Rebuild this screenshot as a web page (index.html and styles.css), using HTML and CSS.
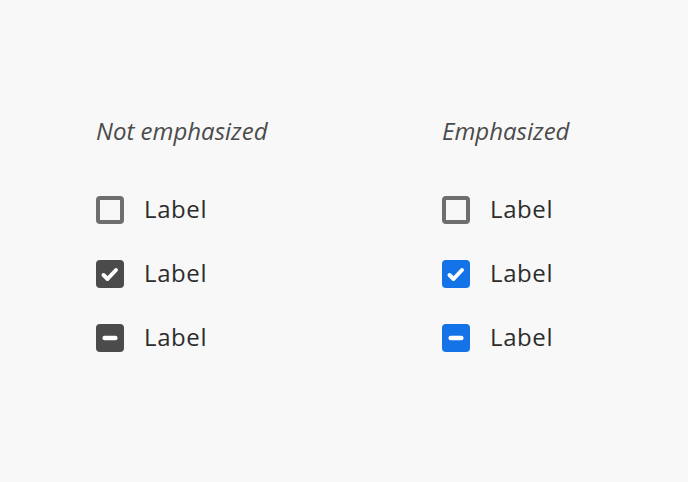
FILE: index.html
```html
<!DOCTYPE html>
<html>
<head>
<meta charset="utf-8">
<link rel="stylesheet" href="styles.css">
</head>
<body>
<div class="page">
  <div class="column first">
    <div class="heading">Not emphasized</div>
    <div class="row"><span class="box"></span><span class="label">Label</span></div>
    <div class="row"><span class="box filled"><svg viewBox="0 0 28 28" width="28" height="28"><path d="M7.5 15 L11.5 19 L20 10" fill="none" stroke="#fff" stroke-width="4" stroke-linecap="round" stroke-linejoin="round"/></svg></span><span class="label">Label</span></div>
    <div class="row"><span class="box filled"><svg viewBox="0 0 28 28" width="28" height="28"><rect x="6.5" y="11.75" width="15" height="4.5" rx="2" fill="#fff"/></svg></span><span class="label">Label</span></div>
  </div>
  <div class="column">
    <div class="heading">Emphasized</div>
    <div class="row"><span class="box"></span><span class="label">Label</span></div>
    <div class="row"><span class="box filled blue"><svg viewBox="0 0 28 28" width="28" height="28"><path d="M7.5 15 L11.5 19 L20 10" fill="none" stroke="#fff" stroke-width="4" stroke-linecap="round" stroke-linejoin="round"/></svg></span><span class="label">Label</span></div>
    <div class="row"><span class="box filled blue"><svg viewBox="0 0 28 28" width="28" height="28"><rect x="6.5" y="11.75" width="15" height="4.5" rx="2" fill="#fff"/></svg></span><span class="label">Label</span></div>
  </div>
</div>
</body>
</html>
```

FILE: styles.css
```css
html, body {
  margin: 0;
  padding: 0;
  background: #f8f8f8;
}
body {
  font-family: "Open Sans", "Noto Sans", sans-serif;
  width: 688px;
  height: 482px;
  overflow: hidden;
}
.page {
  display: flex;
  padding: 115px 0 0 96px;
}
.column {
  flex: none;
  display: flex;
  flex-direction: column;
}
.column.first {
  width: 346px;
}
.heading {
  font-style: italic;
  font-size: 24px;
  line-height: 32px;
  color: #4b4b4b;
  height: 32px;
  margin-bottom: 49px;
}
.row {
  display: flex;
  align-items: center;
  height: 28px;
  margin-bottom: 36px;
}
.box {
  width: 28px;
  height: 28px;
  box-sizing: border-box;
  border: 4px solid #6e6e6e;
  border-radius: 4px;
  background: #f8f8f8;
  flex: none;
}
.box.filled {
  border: none;
  background: #4b4b4b;
}
.box.filled.blue {
  background: #1473e6;
}
.box svg {
  display: block;
}
.label {
  margin-left: 20px;
  padding-bottom: 3px;
  font-size: 24px;
  line-height: 28px;
  letter-spacing: 0.6px;
  color: #2c2c2c;
}
```
